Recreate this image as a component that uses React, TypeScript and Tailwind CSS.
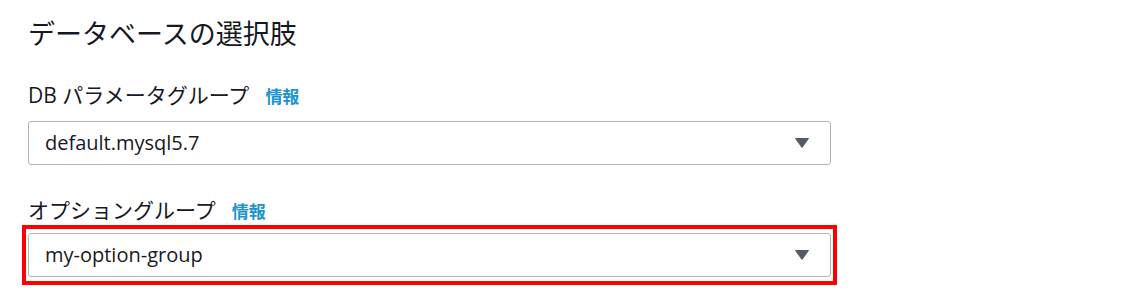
import React from "react";

const font = { fontFamily: '"Open Sans", "Noto Sans CJK JP", sans-serif' };

function Arrow() {
  return (
    <svg width="14" height="10" viewBox="0 0 14 10" className="shrink-0">
      <path d="M0.5 0.5 H13.5 L7 9.5 Z" fill="#545b64" stroke="#545b64" strokeLinejoin="round" />
    </svg>
  );
}

function Select({ value }: { value: string }) {
  return (
    <div className="flex h-[44px] w-[803px] items-center justify-between rounded-[3px] border border-[#aab7b8] bg-white pl-[16px] pr-[21px]">
      <span className="text-[20px] text-[#16191f]">{value}</span>
      <Arrow />
    </div>
  );
}

export default function App() {
  return (
    <div className="h-[307px] w-[1137px] bg-white" style={font}>
      <div className="flex flex-col pl-[28px] pt-[14px]">
        <h2 className="text-[27px] font-normal leading-[40px] text-[#16191f]">データベースの選択肢</h2>
        <div className="mt-[26px]">
          <div className="flex items-baseline">
            <span className="text-[21px] leading-[30px] text-[#16191f]">DB パラメータグループ</span>
            <span className="ml-[16px] text-[17px] font-bold text-[#1a94cf]">情報</span>
          </div>
        </div>
        <div className="mt-[11px]">
          <Select value="default.mysql5.7" />
        </div>
        <div className="mt-[30px]">
          <div className="flex items-baseline">
            <span className="text-[21px] leading-[30px] text-[#16191f]">オプショングループ</span>
            <span className="ml-[16px] text-[17px] font-bold text-[#1a94cf]">情報</span>
          </div>
        </div>
        <div className="-ml-[6px] w-[815px] border-4 border-[#ff0000] px-[2px] py-[4px]">
          <Select value="my-option-group" />
        </div>
      </div>
    </div>
  );
}
